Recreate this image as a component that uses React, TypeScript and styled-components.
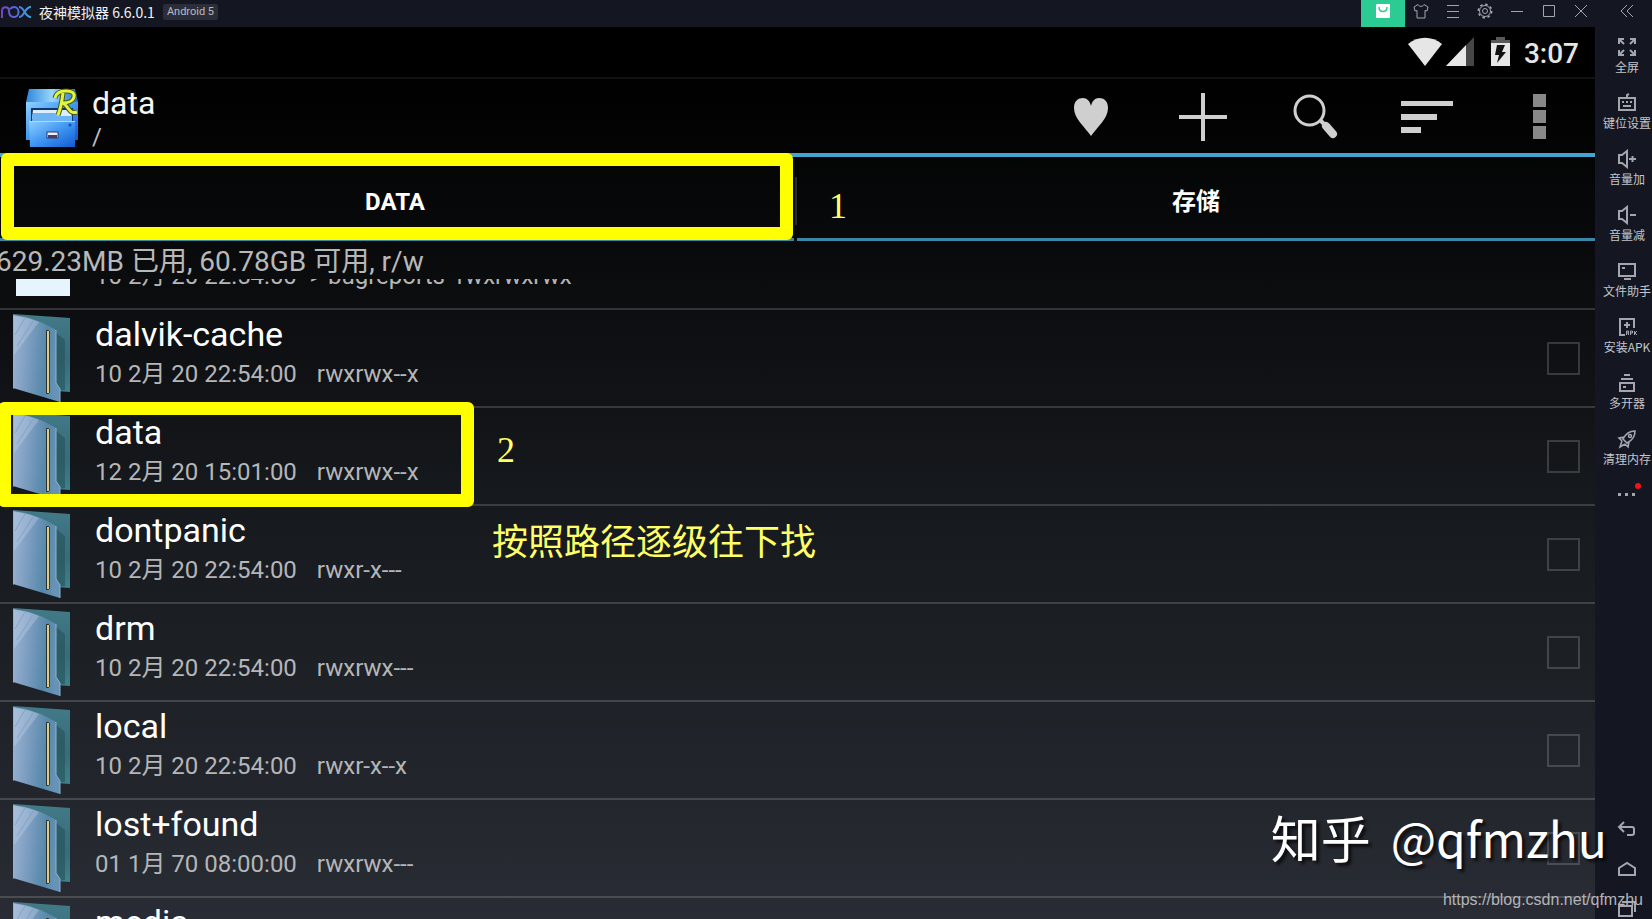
import React from "react";
import styled, { createGlobalStyle, css } from "styled-components";

const Global = createGlobalStyle`
  *, *::before, *::after { box-sizing: border-box; }
  body {
    margin: 0;
    overflow: hidden;
    background: #141722;
    font-family: Roboto, "Noto Sans CJK SC", sans-serif;
  }
  button { font: inherit; color: inherit; background: none; border: 0; padding: 0; cursor: pointer; }
  svg { display: block; flex: none; }
`;

const Window = styled.div`
  display: grid;
  grid-template-columns: minmax(0, 1fr) 57px;
  grid-template-rows: 27px minmax(0, 1fr);
  height: 100vh;
  overflow: hidden;
  color: #fff;
  position: relative;
`;

const TitleBar = styled.header`
  grid-column: 1 / -1;
  display: flex;
  background: #141722;
  color: #a3a6ae;
`;

const Brand = styled.div`
  flex: 1;
  display: flex;
  align-items: center;
  gap: 8px;
  height: 23px;
`;

const AppName = styled.h1`
  margin: 0;
  font: 14px/20px "Noto Sans CJK SC", sans-serif;
  color: #f2f2f4;
`;

const VersionTag = styled.span`
  padding: 0 4px;
  height: 16px;
  border-radius: 2px;
  background: #2b2e39;
  color: #b9bbc2;
  font: 11px/16px Roboto, sans-serif;
`;

const StoreButton = styled.button`
  display: flex;
  justify-content: center;
  width: 44px;
  height: 27px;
  padding-top: 4px;
  background: #2bcb93;
`;

const WindowButton = styled.button<{ $last?: boolean }>`
  display: flex;
  justify-content: center;
  align-items: center;
  width: 32px;
  height: 22px;
  ${(p) => p.$last && css`width: 55px; padding-left: 4px;`}
`;

const Screen = styled.main`
  display: flex;
  flex-direction: column;
  min-height: 0;
  background: #000;
`;

const StatusBar = styled.div`
  display: flex;
  align-items: center;
  justify-content: flex-end;
  flex: none;
  height: 50px;
  padding-right: 16px;
  color: #e6e6e6;
`;

const Clock = styled.time`
  margin-left: 14px;
  padding-top: 4px;
  font-size: 28px;
  line-height: 32px;
  font-weight: 500;
`;

const Explorer = styled.section`
  display: flex;
  flex-direction: column;
  flex: 1;
  min-height: 0;
  border-top: 2px solid #121212;
  background: linear-gradient(#000, #0b0c0e 24%, #15181c 48%, #22262c 84%, #292c34);
`;

const ActionBar = styled.div`
  display: flex;
  flex: none;
  height: 74px;
  padding-left: 25px;
`;

const Location = styled.div`
  flex: 1;
  display: flex;
  align-items: center;
  gap: 12px;
  padding-top: 6px;
`;

const FolderTitle = styled.h2`
  margin: 0;
  font-size: 32px;
  line-height: 36px;
  font-weight: 400;
  color: #f4f4f4;
`;

const FolderPath = styled.div`
  font-size: 24px;
  line-height: 32px;
  color: #bebebe;
`;

const Action = styled.button`
  display: flex;
  align-items: center;
  justify-content: center;
  width: 112px;
  padding-top: 2px;
  color: #cfcfcf;
`;

const Tabs = styled.div`
  display: flex;
  flex: none;
  height: 88px;
  margin-left: -4px;
  border-top: 4px solid #43a5d0;
`;

const Tab = styled.button`
  flex: 1;
  position: relative;
  padding-top: 9px;
  border-bottom: 3px solid #3c87a8;
  font-size: 24px;
  line-height: 32px;
  font-weight: 700;
`;

const TabDivider = styled.span`
  width: 3px;
  margin: 20px 0 16px;
  border-right: 2px solid #2a2b2c;
`;

const Usage = styled.p`
  margin: 0 0 0 -4px;
  flex: none;
  height: 38px;
  font-size: 28px;
  line-height: 42px;
  color: #b7b8b9;
  white-space: nowrap;
`;

const ListView = styled.div`
  flex: 1;
  min-height: 0;
  overflow: hidden;
`;

/* The list is scrolled part of the way through its first entry. */
const FileList = styled.ul`
  list-style: none;
  margin: -67px 0 0;
  padding: 0;
`;

const Row = styled.li`
  position: relative;
  display: flex;
  align-items: center;
  height: 98px;
  padding: 0 15px 0 13px;
  border-bottom: 2px solid rgba(255, 255, 255, 0.16);
`;

const Entry = styled.div`
  flex: 1;
  padding: 0 0 12px 25px;
`;

const EntryName = styled.div`
  min-height: 44px;
  font-size: 34px;
  line-height: 44px;
`;

const Meta = styled.div`
  display: flex;
  gap: 20px;
  font-size: 24px;
  line-height: 36px;
  color: #b5b6b8;
  white-space: pre;
`;

const Check = styled.input`
  appearance: none;
  width: 33px;
  height: 33px;
  margin: 0;
  border: 2px solid rgba(255, 255, 255, 0.17);
`;

const Marker = styled.div<{ $target: "tab" | "row" }>`
  position: absolute;
  z-index: 2;
  border: 13px solid #ff0;
  border-radius: 6px;
  pointer-events: none;
  ${(p) =>
    p.$target === "tab"
      ? css`inset: -4px 1px -2px 5px;`
      : css`top: -6px; left: -2px; width: 476px; height: 105px;`}
`;

const Note = styled.span<{ $x: number; $y: number }>`
  position: absolute;
  z-index: 2;
  left: ${(p) => p.$x}px;
  top: ${(p) => p.$y}px;
  font: 400 36px/40px "Liberation Serif", "Noto Sans CJK SC", serif;
  color: #ffff66;
  white-space: nowrap;
`;

const Sidebar = styled.aside`
  display: flex;
  flex-direction: column;
  min-height: 0;
  padding: 6px 0 0 7px;
  background: #141722;
  color: #a3a6ae;
`;

const Tool = styled.button`
  display: flex;
  flex-direction: column;
  align-items: center;
  flex: none;
  height: 56px;
  padding-top: 4px;
  font: 12px/20px "Noto Sans CJK SC", sans-serif;
  white-space: nowrap;
  span { color: #c3c5cb; }
`;

const MoreTools = styled.button`
  display: flex;
  justify-content: center;
  height: 24px;
`;

const SystemKeys = styled.nav`
  display: flex;
  flex-direction: column;
  margin-top: auto;
  margin-bottom: -10px;
`;

const SystemKey = styled.button`
  display: flex;
  align-items: center;
  justify-content: center;
  height: 40px;
`;

const Signature = styled.div`
  position: absolute;
  z-index: 3;
  right: 45px;
  bottom: 46px;
  display: flex;
  align-items: baseline;
  gap: 20px;
  font: 50px/72px "Noto Sans CJK SC", sans-serif;
  text-shadow: 3px 3px 3px rgba(0, 0, 0, 0.7);
  white-space: nowrap;
`;

const Handle = styled.span`
  font-size: 48px;
`;

const SourceLink = styled.a`
  position: absolute;
  z-index: 3;
  right: 9px;
  bottom: 9px;
  font: 16px/20px "Liberation Sans", sans-serif;
  color: #b3b4b8;
  text-decoration: none;
`;

const NoxLogo = () => (
  <svg width="31" height="14" viewBox="0 0 31 14" fill="none" strokeWidth="2">
    <defs>
      <linearGradient id="nox" x1="0" x2="31" y1="0" y2="0" gradientUnits="userSpaceOnUse">
        <stop stopColor="#7a3fc4" />
        <stop offset=".55" stopColor="#4f6fe0" />
        <stop offset="1" stopColor="#3aa9dc" />
      </linearGradient>
    </defs>
    <g stroke="url(#nox)">
      <path d="M2 13V6c0-5 7-5 7 0 0 4 1 6 5 6 6 0 6-10 0-10-2 0-3 1-4 2" />
      <path d="M19 2c6 0 5 10 12 10M31 2c-7 0-6 10-12 10" />
    </g>
  </svg>
);

const CabinetIcon = () => (
  <svg width="55" height="62" viewBox="0 0 55 62">
    <defs>
      <linearGradient id="cab" x1="0" y1="0" x2="1" y2="1">
        <stop stopColor="#8fd0ff" />
        <stop offset=".5" stopColor="#3f97f2" />
        <stop offset="1" stopColor="#1259d0" />
      </linearGradient>
      <linearGradient id="cabTop" x1="0" y1="0" x2="1" y2="0">
        <stop stopColor="#2b86dc" />
        <stop offset=".5" stopColor="#9ad6fb" />
        <stop offset="1" stopColor="#2170d8" />
      </linearGradient>
    </defs>
    <path d="M4 1h46l3 13H1z" fill="url(#cabTop)" />
    <path d="M1 14h52v38H1z" fill="url(#cab)" />
    <path d="M6 20h42v14H6z" fill="#12356f" />
    <path d="M8 22h38l1 9H7z" fill="#dbeefc" />
    <path d="M8 25h22l3 3h14v5H7z" fill="#6cb4f4" />
    <path d="M4 33h46v26H5z" fill="url(#cab)" />
    <path d="M4 33h46v1H4z" fill="#a8dcff" />
    <rect x="22" y="44" width="11" height="6" fill="#eef" stroke="#333a66" />
    <path d="M23 47h9v3h-9z" fill="#4a3d63" />
    <circle cx="45" cy="37" r="1.500" fill="#1a4fae" />
    <g fill="none" strokeLinejoin="round">
      <path d="M33 27c3-7 4-14 5-22M30 10c1-5 6-7 11-7 6 0 9 2 8 6-1 4-6 6-11 6 5 2 6 12 14 9" stroke="#3d5a1c" strokeWidth="5" />
      <path d="M33 27c3-7 4-14 5-22M30 10c1-5 6-7 11-7 6 0 9 2 8 6-1 4-6 6-11 6 5 2 6 12 14 9" stroke="#e6f43c" strokeWidth="3" />
    </g>
  </svg>
);

const FolderIcon = () => (
  <svg width="57" height="90" viewBox="0 0 57 90">
    <defs>
      <linearGradient id="front" x1="0" y1="0" x2="1" y2="0.150">
        <stop stopColor="#9db4d4" />
        <stop offset=".35" stopColor="#7f9fc2" />
        <stop offset=".75" stopColor="#5688aa" />
        <stop offset="1" stopColor="#6793b6" />
      </linearGradient>
      <linearGradient id="back" x1="0" y1="0" x2="0" y2="1">
        <stop stopColor="#437a88" />
        <stop offset=".6" stopColor="#376c78" />
        <stop offset="1" stopColor="#40808c" />
      </linearGradient>
    </defs>
    <path d="M0 1l57 4v74l-14-1L0 60z" fill="url(#back)" />
    <path d="M43 20l9 7v50l-9 1z" fill="#255159" opacity=".6" />
    <path d="M0 2c16 2 30 7 43 15v53l4 6v13L0 75z" fill="url(#front)" />
    <path d="M1 3c10 1 18 3 25 6L1 42z" fill="#c2d3ea" opacity=".35" />
    <path d="M0.500 2.500v73M43 17v53l4 6v13" fill="none" stroke="#8fb2d0" />
    <path d="M12 5L2 22M20 8L4 33" stroke="#6387ad" opacity=".4" />
    <rect x="33" y="17" width="3" height="64" rx="1" fill="#2c2f26" />
    <rect x="34" y="18" width="2" height="62" fill="#d9cc90" />
    <path d="M36.500 18v62" stroke="#33403f" />
  </svg>
);

const LinkFileIcon = () => (
  <svg width="57" height="90" viewBox="0 0 57 90">
    <path d="M3 8h54v73H3z" fill="#f0f9fe" />
    <path d="M3 50h54v31H3z" fill="#dff1fb" opacity=".6" />
  </svg>
);

const WifiIcon = () => (
  <svg width="34" height="30" viewBox="0 0 34 30" fill="currentColor">
    <path d="M0 7C10-1.500 24-1.500 34 7L17 29z" />
  </svg>
);

const StatusIcon = styled.svg<{ $gap: number }>`
  margin-left: ${(p) => p.$gap}px;
`;

const SignalIcon = () => (
  <StatusIcon $gap={4} width="28" height="30" viewBox="0 0 28 30">
    <path d="M28 0v29H0z" fill="#464646" />
    <path d="M20 8v21H0z" fill="currentColor" />
  </StatusIcon>
);

const BatteryIcon = () => (
  <StatusIcon $gap={17} width="19" height="30" viewBox="0 0 19 30">
    <path d="M5 0h9v3h5v3H0V3h5z" fill="#585858" />
    <path d="M0 6h19v23H0z" fill="currentColor" />
    <path d="M6 8h8l-3 7h4L6 26l2-8H4z" fill="#111" />
  </StatusIcon>
);

const HeartIcon = () => (
  <svg width="36" height="40" viewBox="0 0 36 40" fill="currentColor">
    <path d="M18 39C12 30 1 22 1 11 1 4 5 1 10 1c4 0 7 3 8 8 1-5 4-8 8-8 5 0 9 3 9 10 0 11-11 19-17 28z" />
  </svg>
);
const PlusIcon = () => (
  <svg width="48" height="48" viewBox="0 0 48 48" fill="currentColor">
    <path d="M22 0h4v22h22v4H26v22h-4V26H0v-4h22z" />
  </svg>
);
const SearchIcon = () => (
  <svg width="46" height="46" viewBox="0 0 46 46" fill="none" stroke="currentColor">
    <circle cx="17.500" cy="16.500" r="14.500" strokeWidth="3" />
    <path d="M28 26l5 5" strokeWidth="4" />
    <path d="M34 32l7 8" strokeWidth="8" strokeLinecap="round" />
  </svg>
);
const SortIcon = () => (
  <svg width="52" height="34" viewBox="0 0 52 34" fill="currentColor">
    <path d="M0 1h52v5H0zM0 14h36v6H0zM0 27h20v6H0z" />
  </svg>
);
const OverflowIcon = () => (
  <svg width="13" height="46" viewBox="0 0 13 46" fill="#888">
    <path d="M0 0h13v13H0zM0 16h13v13H0zM0 32h13v13H0z" />
  </svg>
);

const Line = ({ w = 20, h = 20, sw = 2, children }: { w?: number; h?: number; sw?: number; children: React.ReactNode }) => (
  <svg width={w} height={h} viewBox={`0 0 ${w} ${h}`} fill="none" stroke="currentColor" strokeWidth={sw}>
    {children}
  </svg>
);

const windowButtons = [
  { label: "Theme", art: <path d="M5 1.500L1 4l1 4 2-.5V15h8V7.500l2 .5 1-4-4-2.500C10 4 6 4 5 1.500z" /> },
  { label: "Menu", art: <path d="M2 2.500h12M2 8.500h12M2 14.500h12" /> },
  {
    label: "Settings",
    art: (
      <>
        <circle cx="8" cy="8" r="5.500" />
        <circle cx="8" cy="8" r="2.500" />
        <circle cx="8" cy="8" r="6.700" strokeWidth="1.600" strokeDasharray="2.600 2.660" />
      </>
    ),
  },
  { label: "Minimize", art: <path d="M2 8.500h12" /> },
  { label: "Maximize", art: <path d="M2.500 2.500h11v11h-11z" /> },
  { label: "Close", art: <path d="M2 2l12 12M14 2L2 14" /> },
  { label: "Collapse", art: <path d="M8 2L2 8l6 6M14 2L8 8l6 6" /> },
];

const tools = [
  { label: "全屏", art: <path d="M2 7V2h5M2 2l5 5M13 2h5v5M18 2l-5 5M2 13v5h5M2 18l5-5M18 13v5h-5M18 18l-5-5" /> },
  { label: "键位设置", art: <path d="M2 5h16v12H2zM10 5V2l2-1M5 9h2M9 9h2M13 9h2M6 13h8" /> },
  { label: "音量加", art: <path d="M2 6h3l5-4v16l-5-4H2zM12 10h7M15.500 7v6" /> },
  { label: "音量减", art: <path d="M2 6h3l5-4v16l-5-4H2zM13 10h6" /> },
  { label: "文件助手", art: <path d="M2 3h16v12H2zM5 7h3M7 18h7" /> },
  {
    label: "安装APK",
    art: (
      <>
        <path d="M8 18H3V2h14v9M10 5v6M7 8h6" />
        <path d="M9.500 18v-4h2v4M9.500 16h2M13.500 18v-4h2v2h-2M17.500 14v4M20 14l-2 2 2 2" strokeWidth="1" />
      </>
    ),
  },
  { label: "多开器", art: <path d="M3 10h14v8H3zM4 6h12M7 2h6M6 14h3" /> },
  {
    label: "清理内存",
    art: (
      <>
        <path d="M18 2c-5 0-9 2-12 8l4 4c6-3 8-7 8-12zM7 8L2 9l3 3M12 13l-1 5-3-3M5 12l-2 6 5-3" strokeWidth="1.600" />
        <circle cx="13" cy="7" r="1.500" strokeWidth="1.500" />
      </>
    ),
  },
];

const files = [
  { name: "dalvik-cache", date: "10 2月 20 22:54:00", mode: "rwxrwx--x" },
  { name: "data", date: "12 2月 20 15:01:00", mode: "rwxrwx--x" },
  { name: "dontpanic", date: "10 2月 20 22:54:00", mode: "rwxr-x---" },
  { name: "drm", date: "10 2月 20 22:54:00", mode: "rwxrwx---" },
  { name: "local", date: "10 2月 20 22:54:00", mode: "rwxr-x--x" },
  { name: "lost+found", date: "01 1月 70 08:00:00", mode: "rwxrwx---" },
  { name: "media", date: "", mode: "" },
];

export default function App() {
  return (
    <Window>
      <Global />
      <TitleBar>
        <Brand>
          <NoxLogo />
          <AppName>夜神模拟器 6.6.0.1</AppName>
          <VersionTag>Android 5</VersionTag>
        </Brand>
        <StoreButton aria-label="Store">
          <svg width="16" height="16" viewBox="0 0 16 16">
            <rect x="1" width="14" height="14" rx="1" fill="#fff" />
            <path d="M4 3c0 6 8 6 8 0" fill="none" stroke="#2bcb93" strokeWidth="1.500" />
          </svg>
        </StoreButton>
        {windowButtons.map((b, i) => (
          <WindowButton key={b.label} aria-label={b.label} $last={i === windowButtons.length - 1}>
            <Line w={16} h={16} sw={1}>{b.art}</Line>
          </WindowButton>
        ))}
      </TitleBar>

      <Screen>
        <StatusBar>
          <WifiIcon />
          <SignalIcon />
          <BatteryIcon />
          <Clock>3:07</Clock>
        </StatusBar>
        <Explorer>
          <ActionBar>
            <Location>
              <CabinetIcon />
              <div>
                <FolderTitle>data</FolderTitle>
                <FolderPath>/</FolderPath>
              </div>
            </Location>
            <Action aria-label="Favourites"><HeartIcon /></Action>
            <Action aria-label="Add"><PlusIcon /></Action>
            <Action aria-label="Search"><SearchIcon /></Action>
            <Action aria-label="Sort"><SortIcon /></Action>
            <Action aria-label="More options"><OverflowIcon /></Action>
          </ActionBar>
          <Tabs role="tablist">
            <Tab role="tab" aria-selected="true">
              DATA
              <Marker $target="tab" />
            </Tab>
            <TabDivider />
            <Tab role="tab" aria-selected="false">
              存储
              <Note $x={32} $y={29}>1</Note>
            </Tab>
          </Tabs>
          <Usage>629.23MB 已用, 60.78GB 可用, r/w</Usage>
          <ListView>
            <FileList>
              <Row>
                <LinkFileIcon />
                <Entry>
                  <EntryName />
                  <Meta>
                    <span>{"10 2月 20 22:54:00 -> bugreports  rwxrwxrwx"}</span>
                  </Meta>
                </Entry>
              </Row>
              {files.map((f) => (
                <Row key={f.name}>
                  <FolderIcon />
                  <Entry>
                    <EntryName>{f.name}</EntryName>
                    <Meta>
                      <span>{f.date || " "}</span>
                      <span>{f.mode}</span>
                    </Meta>
                  </Entry>
                  <Check type="checkbox" aria-label={f.name} />
                  {f.name === "data" && (
                    <>
                      <Marker $target="row" />
                      <Note $x={497} $y={22}>2</Note>
                    </>
                  )}
                  {f.name === "dontpanic" && <Note $x={492} $y={17}>按照路径逐级往下找</Note>}
                </Row>
              ))}
            </FileList>
          </ListView>
        </Explorer>
      </Screen>

      <Sidebar>
        {tools.map((t) => (
          <Tool key={t.label}>
            <Line>{t.art}</Line>
            <span>{t.label}</span>
          </Tool>
        ))}
        <MoreTools aria-label="More tools">
          <svg width="28" height="20" viewBox="0 0 28 20" fill="currentColor">
            <path d="M5 12h3v3H5zM12 12h3v3h-3zM19 12h3v3h-3z" />
            <circle cx="25" cy="5" r="3" fill="#f01414" />
          </svg>
        </MoreTools>
        <SystemKeys>
          <SystemKey aria-label="Back"><Line><path d="M7 3L2 8l5 5M2 8h13a2 2 0 0 1 2 2v4a2 2 0 0 1-2 2h-5" /></Line></SystemKey>
          <SystemKey aria-label="Home"><Line><path d="M2 9l8-5 8 5v7H2z" /></Line></SystemKey>
          <SystemKey aria-label="Recent"><Line><path d="M2 7h13v10H2zM5 3h13v10" /></Line></SystemKey>
        </SystemKeys>
      </Sidebar>

      <Signature>
        <span>知乎</span>
        <Handle>@qfmzhu</Handle>
      </Signature>
      <SourceLink href="https://blog.csdn.net/qfmzhu">https://blog.csdn.net/qfmzhu</SourceLink>
    </Window>
  );
}
